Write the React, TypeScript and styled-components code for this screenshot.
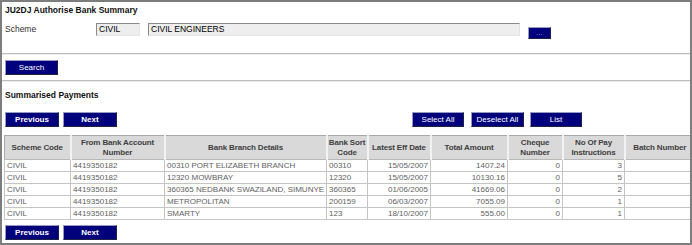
import styled, { createGlobalStyle } from "styled-components";

const GlobalStyle = createGlobalStyle`
    body {
        margin: 0;
        background: #ffffff;
        font-family: "Liberation Sans", Arial, sans-serif;
    }
`

const Frame = styled.div`
    width: 692px;
    height: 245px;
    box-sizing: border-box;
    border: 2px solid #7d7d7d;
    overflow: hidden;
    display: flex;
    flex-direction: column;
    background: #fff;
`

const Block = styled.div<{ $top?: number; $left?: number }>`
    margin-top: ${p => p.$top ?? 0}px;
    padding-left: ${p => p.$left ?? 3}px;
    display: flex;
    align-items: flex-start;
`

const Title = styled.div<{ $top?: number }>`
    margin-top: ${p => p.$top ?? 0}px;
    padding-left: 3px;
    height: 12px;
    line-height: 12px;
    font-size: 8.5px;
    font-weight: bold;
    color: #111;
`

const Label = styled.div`
    width: 91px;
    line-height: 13px;
    font-size: 8.5px;
    color: #333;
`

const Field = styled.div<{ $w: number }>`
    width: ${p => p.$w}px;
    height: 13px;
    box-sizing: border-box;
    margin-right: 8px;
    padding-left: 2px;
    background: #eeeeee;
    border-top: 1px solid #8a8a8a;
    border-left: 1px solid #8a8a8a;
    border-right: 1px solid #e4e4e4;
    border-bottom: 1px solid #e4e4e4;
    font-size: 8.5px;
    line-height: 11px;
    color: #000;
`

const Button = styled.button<{ $w: number; $h?: number; $bold?: boolean; $gap?: number }>`
    width: ${p => p.$w}px;
    height: ${p => p.$h ?? 15}px;
    margin: 0 ${p => p.$gap ?? 0}px 0 0;
    padding: 0;
    box-sizing: border-box;
    background: #00007c;
    color: #fff;
    border: 1px solid;
    border-color: #9a9ac0 #202040 #202040 #9a9ac0;
    font-family: "Liberation Sans", Arial, sans-serif;
    font-size: 8px;
    font-weight: ${p => (p.$bold ? "bold" : "normal")};
    line-height: 1;
    cursor: pointer;
`

const Dots = styled(Button)`
    margin-top: 4px;
    font-size: 6px;
    letter-spacing: 0.5px;
`

const Rule = styled.div<{ $top: number }>`
    margin-top: ${p => p.$top}px;
    height: 0;
    border-top: 1px solid #bdbdbd;
    border-bottom: 1px solid #ececec;
`

const Spacer = styled.div`
    flex: 1;
`

const Table = styled.table`
    border-collapse: collapse;
    table-layout: fixed;
    width: 690px;
    flex: none;
    border: 1px solid #a8a8a8;
    font-size: 8px;
`

const Col = styled.col<{ $w: number }>`
    width: ${p => p.$w}px;
`

const Th = styled.th`
    height: 23px;
    padding: 0;
    background: #d9d9d9;
    color: #404040;
    font-weight: bold;
    font-size: 8px;
    letter-spacing: -0.15px;
    line-height: 10px;
    text-align: center;
    border-left: 2px solid #f2f2f2;
    border-bottom: 1px solid #b8b8b8;
    &:first-child {
        border-left: none;
    }
`

const Td = styled.td<{ $right?: boolean }>`
    height: 11px;
    padding: 0 2px;
    line-height: 10px;
    color: #616161;
    white-space: nowrap;
    overflow: hidden;
    text-align: ${p => (p.$right ? "right" : "left")};
    border: 1px solid #c4c4c4;
`

const columns = [
    { label: "Scheme Code", w: 66 },
    { label: "From Bank Account Number", w: 94 },
    { label: "Bank Branch Details", w: 162 },
    { label: "Bank Sort Code", w: 41 },
    { label: "Latest Eff Date", w: 63 },
    { label: "Total Amount", w: 77 },
    { label: "Cheque Number", w: 55 },
    { label: "No Of Pay Instructions", w: 62 },
    { label: "Batch Number", w: 70 },
]

const rows = [
    ["CIVIL", "4419350182", "00310 PORT ELIZABETH BRANCH", "00310", "15/05/2007", "1407.24", "0", "3"],
    ["CIVIL", "4419350182", "12320 MOWBRAY", "12320", "15/05/2007", "10130.16", "0", "5"],
    ["CIVIL", "4419350182", "360365 NEDBANK SWAZILAND, SIMUNYE", "360365", "01/06/2005", "41669.06", "0", "2"],
    ["CIVIL", "4419350182", "METROPOLITAN", "200159", "06/03/2007", "7055.09", "0", "1"],
    ["CIVIL", "4419350182", "SMARTY", "123", "18/10/2007", "555.00", "0", "1"],
]

const rightAligned = [4, 5, 6, 7]

export default function App() {
    return (
        <>
            <GlobalStyle />
            <Frame>
                <Title $top={2}>JU2DJ Authorise Bank Summary</Title>
                <Block $top={7}>
                    <Label>Scheme</Label>
                    <Field $w={44}>CIVIL</Field>
                    <Field $w={372}>CIVIL ENGINEERS</Field>
                    <Dots $w={23} $h={12}>...</Dots>
                </Block>
                <Rule $top={14} />
                <Block $top={5}>
                    <Button $w={53}>Search</Button>
                </Block>
                <Rule $top={5} />
                <Title $top={7}>Summarised Payments</Title>
                <Block $top={11}>
                    <Button $w={54} $bold $gap={4}>Previous</Button>
                    <Button $w={54} $bold>Next</Button>
                    <Spacer />
                    <Button $w={52} $gap={7}>Select All</Button>
                    <Button $w={53} $gap={6}>Deselect All</Button>
                    <Button $w={52} $gap={108}>List</Button>
                </Block>
                <Block $top={8} $left={2}>
                    <Table>
                        <colgroup>
                            {columns.map(c => (
                                <Col key={c.label} $w={c.w} />
                            ))}
                        </colgroup>
                        <thead>
                            <tr>
                                {columns.map(c => (
                                    <Th key={c.label}>{c.label}</Th>
                                ))}
                            </tr>
                        </thead>
                        <tbody>
                            {rows.map((r, i) => (
                                <tr key={i}>
                                    {r.map((v, j) => (
                                        <Td key={j} $right={rightAligned.includes(j)}>{v}</Td>
                                    ))}
                                    <Td />
                                </tr>
                            ))}
                        </tbody>
                    </Table>
                </Block>
                <Block $top={5}>
                    <Button $w={54} $bold $gap={4}>Previous</Button>
                    <Button $w={54} $bold>Next</Button>
                </Block>
            </Frame>
        </>
    );
}
